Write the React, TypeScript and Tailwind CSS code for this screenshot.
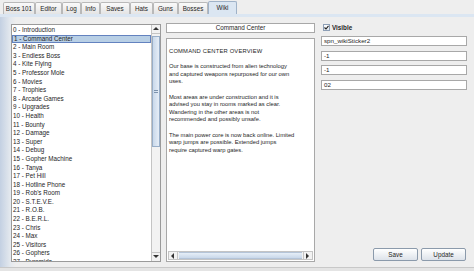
import React from 'react';

const tabs = ['Boss 101', 'Editor', 'Log', 'Info', 'Saves', 'Hats', 'Guns', 'Bosses', 'Wiki'];
const tabWidths = [32, 27, 19, 19, 30, 23, 25, 30, 29];

const pages = [
  '0 - Introduction',
  '1 - Command Center',
  '2 - Main Room',
  '3 - Endless Boss',
  '4 - Kite Flying',
  '5 - Professor Mole',
  '6 - Movies',
  '7 - Trophies',
  '8 - Arcade Games',
  '9 - Upgrades',
  '10 - Health',
  '11 - Bounty',
  '12 - Damage',
  '13 - Super',
  '14 - Debug',
  '15 - Gopher Machine',
  '16 - Tanya',
  '17 - Pet Hill',
  '18 - Hotline Phone',
  "19 - Rob's Room",
  '20 - S.T.E.V.E.',
  '21 - R.O.B.',
  '22 - B.E.R.L.',
  '23 - Chris',
  '24 - Max',
  '25 - Visitors',
  '26 - Gophers',
  '27 - Pyramids',
];

const fields = ['spn_wikiSticker2', '-1', '-1', '02'];

function Arrow({ dir }: { dir: 'up' | 'down' | 'left' | 'right' }) {
  const pts = {
    up: '1,5 4,2 7,5',
    down: '1,2 4,5 7,2',
    left: '5,1 2,4 5,7',
    right: '2,1 5,4 2,7',
  }[dir];
  return (
    <svg width="8" height="8" viewBox="0 0 8 8">
      <polygon points={pts} fill="#333" />
    </svg>
  );
}

export default function App() {
  return (
    <div
      className="w-[474px] h-[271px] bg-[#eeeeee] flex flex-col overflow-hidden text-[#1e1e1e]"
      style={{ fontFamily: '"Liberation Sans", Arial, sans-serif' }}
    >
      {/* tab strip */}
      <div className="h-[14px] shrink-0 flex items-end pl-[3px] pt-[2px]">
        {tabs.map((t, i) => (
          <div
            key={t}
            style={{ width: tabWidths[i] }}
            className={
              'flex items-center justify-center text-[6.3px] border border-b-0 rounded-t-[2px] ' +
              (t === 'Wiki'
                ? 'bg-[#dbe6f2] border-[#9fb2c8] h-[13px]'
                : 'h-[12px] bg-[linear-gradient(#fafafa,#e4e4e4)] border-[#b9b9b9]')
            }
          >
            {t}
          </div>
        ))}
      </div>

      {/* tab content */}
      <div className="flex-1 min-h-0 overflow-hidden border-t-[3px] border-[#dbe6f2] bg-[linear-gradient(to_right,#c3d0e2,#e3e8ee_10px,#eeeeee_16px)] flex pl-[11px] pr-[7px] pt-[7px] pb-[5px] gap-[4px] border-b border-b-[#c8c8c8]">
        {/* page list */}
        <div className="w-[150px] min-h-0 overflow-hidden flex bg-white border border-[#9a9a9a]">
          <div className="flex-1 overflow-hidden pt-[1px]">
            {pages.map((p, i) => (
              <div
                key={p}
                className={
                  'h-[8.6px] text-[6.3px] pl-[1px] whitespace-nowrap ' +
                  (i === 1
                    ? 'bg-[#b8cfe5] border border-[#6382bf] leading-[6.6px]'
                    : 'leading-[8.6px]')
                }
              >
                {p}
              </div>
            ))}
          </div>
          <div className="w-[9px] flex flex-col border-l border-[#c4c4c4] bg-[#f2f2f2]">
            <div className="h-[9px] flex items-center justify-center border-b border-[#c4c4c4]">
              <Arrow dir="up" />
            </div>
            <div className="flex-1 flex flex-col">
              <div className="h-[2px]" />
              <div className="h-[111px] bg-[linear-gradient(to_right,#c9d8ea,#e6eef7)] border border-[#98aec8] flex items-center justify-center">
                <div className="w-[4px] h-[3px] border-y border-[#7d93ad]" />
              </div>
            </div>
            <div className="h-[9px] flex items-center justify-center border-t border-[#c4c4c4]">
              <Arrow dir="down" />
            </div>
          </div>
        </div>

        {/* page content */}
        <div className="w-[149px] min-h-0 flex flex-col gap-[5px] ml-[1px] -mt-[1px]">
          <div className="h-[10px] shrink-0 bg-white border border-[#a8a8a8] flex items-center justify-center text-[6.3px]">
            Command Center
          </div>
          <div className="flex-1 min-h-0 bg-white border border-[#a8a8a8] flex flex-col">
            <div className="flex-1 min-h-0 overflow-hidden pl-[2px] pt-[9px] text-[5.8px] leading-[7.6px]">
              <p className="tracking-[0.2px]">COMMAND CENTER OVERVIEW</p>
              <p className="mt-[7.6px]">
                Our base is constructed from alien technology
                <br />
                and captured weapons repurposed for our own
                <br />
                uses.
              </p>
              <p className="mt-[7.6px]">
                Most areas are under construction and it is
                <br />
                advised you stay in rooms marked as clear.
                <br />
                Wandering in the other areas is not
                <br />
                recommended and possibly unsafe.
              </p>
              <p className="mt-[7.6px]">
                The main power core is now back online. Limited
                <br />
                warp jumps are possible. Extended jumps
                <br />
                require captured warp gates.
              </p>
            </div>
            <div className="h-[9px] shrink-0 mx-[1px] mb-[1px] flex border border-[#c4c4c4] bg-[#f2f2f2]">
              <div className="w-[9px] flex items-center justify-center border-r border-[#c4c4c4]">
                <Arrow dir="left" />
              </div>
              <div className="flex-1 bg-[linear-gradient(#e6eef7,#c9d8ea)] border-y border-[#b4c4d8] mx-[1px]" />
              <div className="w-[9px] flex items-center justify-center border-l border-[#c4c4c4]">
                <Arrow dir="right" />
              </div>
            </div>
          </div>
        </div>

        {/* properties */}
        <div className="flex-1 min-h-0 flex flex-col ml-[2px] -mt-[2px]">
          <label className="h-[11px] flex items-center gap-[2px] text-[6.3px] font-bold pl-[2px]">
            <span className="w-[7px] h-[7px] border border-[#8d9fb6] bg-[linear-gradient(#fff,#dfe6ee)] flex items-center justify-center">
              <svg width="5" height="5" viewBox="0 0 5 5">
                <path d="M0.5 2.5 L2 4 L4.5 0.8" stroke="#222" strokeWidth="1.1" fill="none" />
              </svg>
            </span>
            Visible
          </label>
          <div className="flex flex-col gap-[4.5px] mt-[3px]">
            {fields.map((f, i) => (
              <div
                key={i}
                className="h-[10px] bg-white border border-[#a8a8a8] flex items-center pl-[2px] text-[6.2px]"
              >
                {f}
              </div>
            ))}
          </div>
          <div className="flex-1" />
          <div className="flex justify-end gap-[3px] pr-[1px] mb-[1px]">
            {['Save', 'Update'].map((b) => (
              <button
                key={b}
                className="w-[45px] h-[13px] text-[6.3px] border border-[#8b9aab] rounded-[2px] bg-[linear-gradient(#ffffff,#dde3ea)]"
              >
                {b}
              </button>
            ))}
          </div>
        </div>
      </div>
      <div className="h-[3px] shrink-0 bg-[#e4e4e4]" />
    </div>
  );
}
